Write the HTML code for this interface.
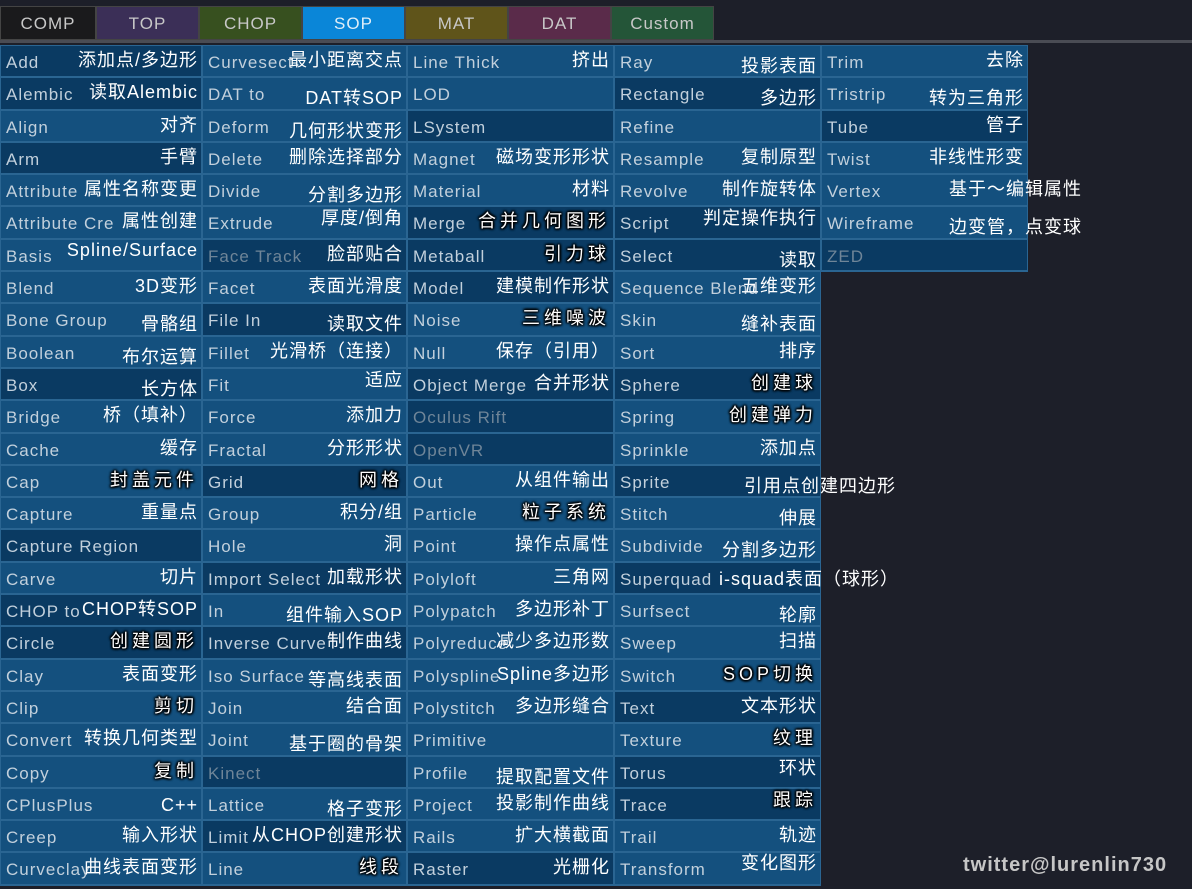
<!DOCTYPE html>
<html><head><meta charset="utf-8"><style>
*{margin:0;padding:0;box-sizing:border-box}
body{width:1192px;height:889px;background:#1d1f29;overflow:hidden;position:relative;font-family:"Liberation Sans","Noto Sans CJK SC",sans-serif}
.tabs{position:absolute;top:6px;left:0;height:34px;display:flex}
.tab{height:34px;width:103px;border:1px solid #444;color:#c8c8c8;font-size:17px;letter-spacing:1px;text-align:center;line-height:34px}
.bar{position:absolute;top:40px;left:0;width:1192px;height:3px;background:#4a4c54}
.col{position:absolute;top:45px;background:#2a6592;padding:1px 1px 0 1px}
.c{position:relative;height:32.3px;background:#14507e;border-bottom:2px solid #2a6592;white-space:nowrap}
.c.d{background:#0a3a62}
.e{position:absolute;left:5px;top:7px;font-size:17px;color:#c2d0dc;letter-spacing:1px}
.g .e{color:#6f8598}
.z{position:absolute;right:3px;top:0px;font-size:18px;color:#fff;letter-spacing:1px;font-family:"Liberation Sans","Noto Sans CJK SC",sans-serif}
.z.lo{top:6px}
.b{letter-spacing:4px;text-shadow:0 0 2px #000,0 0 3px #000,1px 1px 2px #000,-1px -1px 2px #000,1px -1px 2px #000,-1px 1px 2px #000}
.tw{position:absolute;left:963px;top:854px;font-size:20px;font-weight:bold;color:#c6c6c6;letter-spacing:1px}
</style></head><body>
<div class="tabs">
<div class="tab" style="width:96px;background:#1a1a1c">COMP</div>
<div class="tab" style="background:#3b2f57">TOP</div>
<div class="tab" style="background:#37501f">CHOP</div>
<div class="tab" style="background:#0a86d8;color:#e0eef8">SOP</div>
<div class="tab" style="background:#5f541a">MAT</div>
<div class="tab" style="background:#5a2b4a">DAT</div>
<div class="tab" style="background:#245538">Custom</div>
</div>
<div class="bar"></div>

<div class="col" style="left:0;width:202px">
<div class="c d"><span class="e">Add</span><span class="z">添加点/多边形</span></div>
<div class="c d"><span class="e">Alembic</span><span class="z">读取Alembic</span></div>
<div class="c"><span class="e">Align</span><span class="z">对齐</span></div>
<div class="c d"><span class="e">Arm</span><span class="z">手臂</span></div>
<div class="c"><span class="e">Attribute</span><span class="z">属性名称变更</span></div>
<div class="c"><span class="e">Attribute Cre</span><span class="z">属性创建</span></div>
<div class="c"><span class="e">Basis</span><span class="z">Spline/Surface</span></div>
<div class="c"><span class="e">Blend</span><span class="z">3D变形</span></div>
<div class="c"><span class="e">Bone Group</span><span class="z lo">骨骼组</span></div>
<div class="c"><span class="e">Boolean</span><span class="z lo">布尔运算</span></div>
<div class="c d"><span class="e">Box</span><span class="z lo">长方体</span></div>
<div class="c"><span class="e">Bridge</span><span class="z">桥（填补）</span></div>
<div class="c"><span class="e">Cache</span><span class="z">缓存</span></div>
<div class="c"><span class="e">Cap</span><span class="z b">封盖元件</span></div>
<div class="c"><span class="e">Capture</span><span class="z">重量点</span></div>
<div class="c d"><span class="e">Capture Region</span></div>
<div class="c"><span class="e">Carve</span><span class="z">切片</span></div>
<div class="c d"><span class="e">CHOP to</span><span class="z">CHOP转SOP</span></div>
<div class="c d"><span class="e">Circle</span><span class="z b">创建圆形</span></div>
<div class="c"><span class="e">Clay</span><span class="z">表面变形</span></div>
<div class="c"><span class="e">Clip</span><span class="z b">剪切</span></div>
<div class="c"><span class="e">Convert</span><span class="z">转换几何类型</span></div>
<div class="c"><span class="e">Copy</span><span class="z b">复制</span></div>
<div class="c"><span class="e">CPlusPlus</span><span class="z lo">C++</span></div>
<div class="c"><span class="e">Creep</span><span class="z">输入形状</span></div>
<div class="c"><span class="e">Curveclay</span><span class="z">曲线表面变形</span></div>
</div>

<div class="col" style="left:202px;width:205px">
<div class="c"><span class="e">Curvesect</span><span class="z">最小距离交点</span></div>
<div class="c"><span class="e">DAT to</span><span class="z lo">DAT转SOP</span></div>
<div class="c"><span class="e">Deform</span><span class="z lo">几何形状变形</span></div>
<div class="c"><span class="e">Delete</span><span class="z">删除选择部分</span></div>
<div class="c"><span class="e">Divide</span><span class="z lo">分割多边形</span></div>
<div class="c"><span class="e">Extrude</span><span class="z" style="top:-3px">厚度/倒角</span></div>
<div class="c d g"><span class="e">Face Track</span><span class="z">脸部贴合</span></div>
<div class="c"><span class="e">Facet</span><span class="z">表面光滑度</span></div>
<div class="c d"><span class="e">File In</span><span class="z lo">读取文件</span></div>
<div class="c"><span class="e">Fillet</span><span class="z">光滑桥（连接）</span></div>
<div class="c"><span class="e">Fit</span><span class="z" style="top:-3px">适应</span></div>
<div class="c"><span class="e">Force</span><span class="z">添加力</span></div>
<div class="c"><span class="e">Fractal</span><span class="z">分形形状</span></div>
<div class="c d"><span class="e">Grid</span><span class="z b">网格</span></div>
<div class="c"><span class="e">Group</span><span class="z">积分/组</span></div>
<div class="c"><span class="e">Hole</span><span class="z">洞</span></div>
<div class="c d"><span class="e">Import Select</span><span class="z">加载形状</span></div>
<div class="c"><span class="e">In</span><span class="z lo">组件输入SOP</span></div>
<div class="c d"><span class="e">Inverse Curve</span><span class="z">制作曲线</span></div>
<div class="c"><span class="e">Iso Surface</span><span class="z lo">等高线表面</span></div>
<div class="c"><span class="e">Join</span><span class="z">结合面</span></div>
<div class="c"><span class="e">Joint</span><span class="z lo">基于圈的骨架</span></div>
<div class="c d g"><span class="e">Kinect</span></div>
<div class="c"><span class="e">Lattice</span><span class="z lo">格子变形</span></div>
<div class="c d"><span class="e">Limit</span><span class="z">从CHOP创建形状</span></div>
<div class="c"><span class="e">Line</span><span class="z b">线段</span></div>
</div>

<div class="col" style="left:407px;width:207px">
<div class="c"><span class="e">Line Thick</span><span class="z">挤出</span></div>
<div class="c"><span class="e">LOD</span></div>
<div class="c d"><span class="e">LSystem</span></div>
<div class="c"><span class="e">Magnet</span><span class="z">磁场变形形状</span></div>
<div class="c"><span class="e">Material</span><span class="z">材料</span></div>
<div class="c d"><span class="e">Merge</span><span class="z b">合并几何图形</span></div>
<div class="c d"><span class="e">Metaball</span><span class="z b">引力球</span></div>
<div class="c d"><span class="e">Model</span><span class="z">建模制作形状</span></div>
<div class="c"><span class="e">Noise</span><span class="z b">三维噪波</span></div>
<div class="c"><span class="e">Null</span><span class="z">保存（引用）</span></div>
<div class="c d"><span class="e">Object Merge</span><span class="z">合并形状</span></div>
<div class="c d g"><span class="e">Oculus Rift</span></div>
<div class="c d g"><span class="e">OpenVR</span></div>
<div class="c"><span class="e">Out</span><span class="z">从组件输出</span></div>
<div class="c"><span class="e">Particle</span><span class="z b">粒子系统</span></div>
<div class="c"><span class="e">Point</span><span class="z">操作点属性</span></div>
<div class="c"><span class="e">Polyloft</span><span class="z">三角网</span></div>
<div class="c"><span class="e">Polypatch</span><span class="z">多边形补丁</span></div>
<div class="c"><span class="e">Polyreduce</span><span class="z">减少多边形数</span></div>
<div class="c"><span class="e">Polyspline</span><span class="z">Spline多边形</span></div>
<div class="c"><span class="e">Polystitch</span><span class="z">多边形缝合</span></div>
<div class="c"><span class="e">Primitive</span></div>
<div class="c"><span class="e">Profile</span><span class="z lo">提取配置文件</span></div>
<div class="c"><span class="e">Project</span><span class="z">投影制作曲线</span></div>
<div class="c"><span class="e">Rails</span><span class="z">扩大横截面</span></div>
<div class="c d"><span class="e">Raster</span><span class="z">光栅化</span></div>
</div>

<div class="col" style="left:614px;width:207px">
<div class="c"><span class="e">Ray</span><span class="z lo">投影表面</span></div>
<div class="c d"><span class="e">Rectangle</span><span class="z lo">多边形</span></div>
<div class="c"><span class="e">Refine</span></div>
<div class="c"><span class="e">Resample</span><span class="z">复制原型</span></div>
<div class="c"><span class="e">Revolve</span><span class="z">制作旋转体</span></div>
<div class="c d"><span class="e">Script</span><span class="z" style="top:-3px">判定操作执行</span></div>
<div class="c d"><span class="e">Select</span><span class="z lo">读取</span></div>
<div class="c"><span class="e">Sequence Blend</span><span class="z">五维变形</span></div>
<div class="c"><span class="e">Skin</span><span class="z lo">缝补表面</span></div>
<div class="c"><span class="e">Sort</span><span class="z">排序</span></div>
<div class="c d"><span class="e">Sphere</span><span class="z b">创建球</span></div>
<div class="c"><span class="e">Spring</span><span class="z b">创建弹力</span></div>
<div class="c"><span class="e">Sprinkle</span><span class="z">添加点</span></div>
<div class="c d"><span class="e">Sprite</span><span class="z lo" style="right:auto;left:129px">引用点创建四边形</span></div>
<div class="c"><span class="e">Stitch</span><span class="z lo">伸展</span></div>
<div class="c"><span class="e">Subdivide</span><span class="z lo">分割多边形</span></div>
<div class="c d"><span class="e">Superquad</span><span class="z" style="right:auto;left:104px;top:2px">i-squad表面（球形）</span></div>
<div class="c"><span class="e">Surfsect</span><span class="z lo">轮廓</span></div>
<div class="c"><span class="e">Sweep</span><span class="z">扫描</span></div>
<div class="c"><span class="e">Switch</span><span class="z b">SOP切换</span></div>
<div class="c d"><span class="e">Text</span><span class="z">文本形状</span></div>
<div class="c"><span class="e">Texture</span><span class="z b">纹理</span></div>
<div class="c d"><span class="e">Torus</span><span class="z" style="top:-3px">环状</span></div>
<div class="c d"><span class="e">Trace</span><span class="z b" style="top:-3px">跟踪</span></div>
<div class="c"><span class="e">Trail</span><span class="z">轨迹</span></div>
<div class="c"><span class="e">Transform</span><span class="z" style="top:-4px">变化图形</span></div>
</div>

<div class="col" style="left:821px;width:207px">
<div class="c"><span class="e">Trim</span><span class="z">去除</span></div>
<div class="c"><span class="e">Tristrip</span><span class="z lo">转为三角形</span></div>
<div class="c d"><span class="e">Tube</span><span class="z">管子</span></div>
<div class="c"><span class="e">Twist</span><span class="z">非线性形变</span></div>
<div class="c"><span class="e">Vertex</span><span class="z" style="right:auto;left:127px;top:0">基于～编辑属性</span></div>
<div class="c"><span class="e">Wireframe</span><span class="z lo" style="right:auto;left:127px">边变管，点变球</span></div>
<div class="c d g"><span class="e">ZED</span></div>
</div>

<div class="tw">twitter@lurenlin730</div>
</body></html>
